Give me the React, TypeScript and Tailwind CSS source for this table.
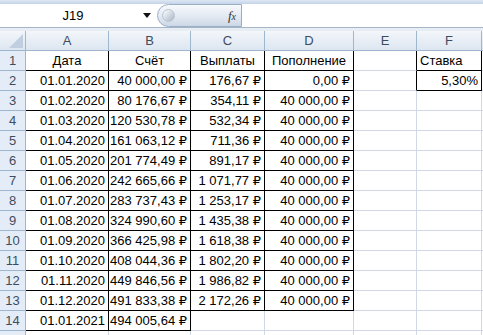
const COLS = ['A', 'B', 'C', 'D', 'E', 'F', ''];
const WIDTHS = ['w-[83px]', 'w-[82px]', 'w-[74px]', 'w-[89px]', 'w-[63px]', 'w-[65px]', 'w-[20px]'];

type Cell = { v: string; align?: 'l' | 'c' | 'r' };

const rows: Cell[][] = [
  [{ v: 'Дата', align: 'c' }, { v: 'Счёт', align: 'c' }, { v: 'Выплаты', align: 'c' }, { v: 'Пополнение', align: 'c' }, { v: '' }, { v: 'Ставка', align: 'l' }],
  [{ v: '01.01.2020' }, { v: '40 000,00 ₽' }, { v: '176,67 ₽' }, { v: '0,00 ₽' }, { v: '' }, { v: '5,30%' }],
  [{ v: '01.02.2020' }, { v: '80 176,67 ₽' }, { v: '354,11 ₽' }, { v: '40 000,00 ₽' }],
  [{ v: '01.03.2020' }, { v: '120 530,78 ₽' }, { v: '532,34 ₽' }, { v: '40 000,00 ₽' }],
  [{ v: '01.04.2020' }, { v: '161 063,12 ₽' }, { v: '711,36 ₽' }, { v: '40 000,00 ₽' }],
  [{ v: '01.05.2020' }, { v: '201 774,49 ₽' }, { v: '891,17 ₽' }, { v: '40 000,00 ₽' }],
  [{ v: '01.06.2020' }, { v: '242 665,66 ₽' }, { v: '1 071,77 ₽' }, { v: '40 000,00 ₽' }],
  [{ v: '01.07.2020' }, { v: '283 737,43 ₽' }, { v: '1 253,17 ₽' }, { v: '40 000,00 ₽' }],
  [{ v: '01.08.2020' }, { v: '324 990,60 ₽' }, { v: '1 435,38 ₽' }, { v: '40 000,00 ₽' }],
  [{ v: '01.09.2020' }, { v: '366 425,98 ₽' }, { v: '1 618,38 ₽' }, { v: '40 000,00 ₽' }],
  [{ v: '01.10.2020' }, { v: '408 044,36 ₽' }, { v: '1 802,20 ₽' }, { v: '40 000,00 ₽' }],
  [{ v: '01.11.2020' }, { v: '449 846,56 ₽' }, { v: '1 986,82 ₽' }, { v: '40 000,00 ₽' }],
  [{ v: '01.12.2020' }, { v: '491 833,38 ₽' }, { v: '2 172,26 ₽' }, { v: '40 000,00 ₽' }],
  [{ v: '01.01.2021' }, { v: '494 005,64 ₽' }],
  [],
];

// which cells carry the thin black border
const bordered = (r: number, c: number) => {
  if (r >= 1 && r <= 13 && c <= 3) return true;
  if (r === 14 && c <= 1) return true;
  if (c === 5 && (r === 1 || r === 2)) return true;
  return false;
};

const NameBox = () => (
  <div className="w-[157px] shrink-0 flex items-center bg-white">
    <div className="w-[146px] text-center text-[13px] text-black">J19</div>
    <svg width="8" height="5" viewBox="0 0 8 5" className="ml-[-3px]">
      <path d="M0 0 L8 0 L4 5 Z" fill="#111" />
    </svg>
  </div>
);

const FxPill = () => (
  <div className="w-[85px] shrink-0 h-full rounded-l-full border border-[#9aaec6] bg-gradient-to-b from-[#f7f9fc] via-[#e4ebf4] to-[#cdd8e6] flex items-center justify-between pl-[4px] pr-[5px]">
    <div className="w-[13px] h-[13px] rounded-full bg-gradient-to-br from-[#ffffff] to-[#a9b6c6] border border-[#b9c4d2]" />
    <span className="text-[13px] italic text-[#333] font-['Liberation_Serif',serif]">
      f<span className="text-[10px]">x</span>
    </span>
  </div>
);

export default function App() {
  return (
    <div className="w-[483px] h-[335px] overflow-hidden bg-white font-['Liberation_Sans','DejaVu_Sans',sans-serif]">
      <div className="h-[4px] bg-gradient-to-b from-[#dfe8f4] to-[#c3d3e8]" />
      <div className="h-[24px] flex border-b border-[#a5b6ca] bg-white">
        <NameBox />
        <FxPill />
        <div className="flex-1 bg-white" />
      </div>
      <div className="h-[3px] bg-[#e8edf4]" />

      <div className="flex h-[20px]">
        <div className="w-[26px] shrink-0 h-full relative border-r border-b border-[#9eb6ce] bg-gradient-to-b from-[#f3f6fa] to-[#dde6f1]">
          <svg width="14" height="14" viewBox="0 0 14 14" className="absolute right-[2px] bottom-[2px]">
            <path d="M14 0 L14 14 L0 14 Z" fill="#c0cee0" />
          </svg>
        </div>
        {COLS.map((c, i) => (
          <div
            key={i}
            className={`${WIDTHS[i]} shrink-0 h-full flex items-center justify-center text-[13px] text-[#3e4d5e] border-r border-b border-[#9eb6ce] bg-gradient-to-b from-[#f3f6fa] to-[#dde6f1]`}
          >
            {c}
          </div>
        ))}
      </div>

      {rows.map((row, ri) => {
        const r = ri + 1;
        return (
          <div key={r} className="flex h-[20px]">
            <div className="w-[26px] shrink-0 h-full flex items-center justify-center text-[13px] text-[#3e4d5e] bg-[#e4ecf7] border-r border-b border-[#9eb6ce]">
              {r <= 14 ? r : ''}
            </div>
            {COLS.map((_, c) => {
              const cell = row[c];
              const right = bordered(r, c) || bordered(r, c + 1) ? 'border-r-black' : 'border-r-[#d0d7e5]';
              const bottom = bordered(r, c) || bordered(r + 1, c) ? 'border-b-black' : 'border-b-[#d0d7e5]';
              const align =
                cell?.align === 'c' ? 'justify-center' : cell?.align === 'l' ? 'justify-start pl-[3px]' : 'justify-end pr-[3px]';
              return (
                <div
                  key={c}
                  className={`${WIDTHS[c]} shrink-0 h-full flex items-center whitespace-nowrap text-[13px] text-black border-r border-b ${right} ${bottom} ${align}`}
                >
                  {cell?.v}
                </div>
              );
            })}
          </div>
        );
      })}
    </div>
  );
}
